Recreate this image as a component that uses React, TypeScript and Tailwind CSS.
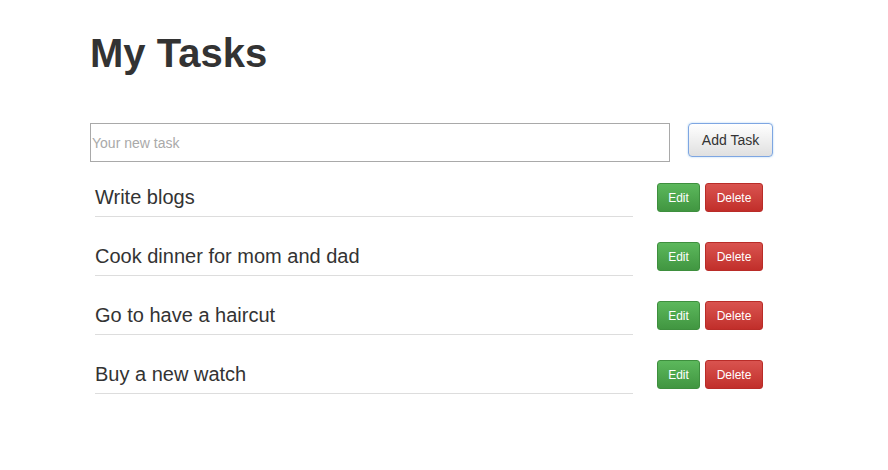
import React from 'react';

const tasks = ['Write blogs', 'Cook dinner for mom and dad', 'Go to have a haircut', 'Buy a new watch'];

const App = () => {
  return (
    <div className="min-h-[470px] bg-white pl-[90px] pt-[32px] font-['Liberation_Sans',Arial,sans-serif] text-[#333]">
      <h1 className="m-0 text-[40px] font-bold leading-[43px] text-[#333]">My Tasks</h1>

      <div className="mt-[48px] flex items-start">
        <input
          type="text"
          placeholder="Your new task"
          className="h-[39px] w-[580px] border border-[#a9a9a9] px-[1px] text-[14px] text-[#333] outline-none placeholder:text-[#a9a9a9]"
        />
        <button className="ml-[18px] h-[34px] w-[85px] rounded-[4px] border border-[#7ea6e2] bg-gradient-to-b from-white to-[#e0e0e0] text-[14px] text-[#333] shadow-[0_0_2px_rgba(102,175,233,0.6)]">
          Add Task
        </button>
      </div>

      <ul className="mt-[21px] flex flex-col gap-[25px] pl-[5px]">
        {tasks.map((task) => (
          <li key={task} className="flex items-start">
            <div className="w-[538px] border-b border-[#ddd] pb-[5px] text-[20px] leading-[28px] text-[#333]">
              {task}
            </div>
            <div className="ml-[24px] flex gap-[5px]">
              <button className="h-[29px] w-[43px] rounded-[3px] border border-[#3e8f3e] bg-gradient-to-b from-[#5cb85c] to-[#419641] text-[12px] text-white">
                Edit
              </button>
              <button className="h-[29px] w-[58px] rounded-[3px] border border-[#b92c28] bg-gradient-to-b from-[#d9534f] to-[#c12e2a] text-[12px] text-white">
                Delete
              </button>
            </div>
          </li>
        ))}
      </ul>
    </div>
  );
};

export default App;
